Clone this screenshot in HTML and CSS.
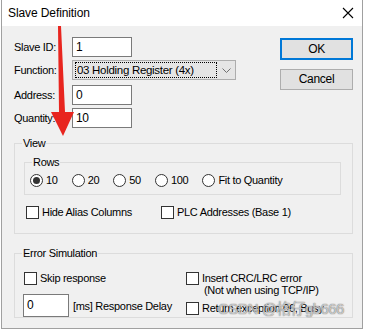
FILE: index.html
```html
<!DOCTYPE html>
<html lang="en">
<head>
    <meta charset="UTF-8">
    <title>Slave Definition</title>
    <link rel="stylesheet" href="styles.css">
</head>
<body>
    <div class="window">
        <div class="titlebar">
            <span class="title">Slave Definition</span>
            <svg class="close" width="12" height="12" viewBox="0 0 12 12">
                <path d="M1 1 L11 11 M11 1 L1 11" stroke="#000" stroke-width="1.1" fill="none"/>
            </svg>
        </div>

        <div class="dialog">
            <div class="top">
                <div class="fields">
                    <div class="row"><span class="label">Slave ID:</span><div class="edit">1</div></div>
                    <div class="row row-combo">
                        <span class="label">Function:</span>
                        <div class="combo">
                            <span class="combo-text">03 Holding Register (4x)</span>
                            <svg class="chevron" width="9" height="5" viewBox="0 0 9 5">
                                <path d="M0.5 0.5 L4.5 4.5 L8.5 0.5" stroke="#707070" fill="none"/>
                            </svg>
                        </div>
                    </div>
                    <div class="row row-address"><span class="label">Address:</span><div class="edit">0</div></div>
                    <div class="row"><span class="label">Quantity:</span><div class="edit">10</div></div>
                </div>
                <div class="buttons">
                    <div class="btn btn-default">OK</div>
                    <div class="btn btn-cancel">Cancel</div>
                </div>
            </div>

            <fieldset class="group group-view">
                <legend>View</legend>
                <fieldset class="group group-rows">
                    <legend>Rows</legend>
                    <div class="radios">
                        <span class="option"><span class="radio checked"></span>10</span>
                        <span class="option"><span class="radio"></span>20</span>
                        <span class="option"><span class="radio"></span>50</span>
                        <span class="option"><span class="radio"></span>100</span>
                        <span class="option"><span class="radio"></span>Fit to Quantity</span>
                    </div>
                </fieldset>
                <div class="view-checks">
                    <span class="option"><span class="check"></span>Hide Alias Columns</span>
                    <span class="option"><span class="check"></span>PLC Addresses (Base 1)</span>
                </div>
            </fieldset>

            <fieldset class="group group-error">
                <legend>Error Simulation</legend>
                <div class="error-grid">
                    <div class="error-left">
                        <span class="option"><span class="check"></span>Skip response</span>
                        <div class="delay-row">
                            <div class="edit edit-delay">0</div>
                            <span>[ms] Response Delay</span>
                        </div>
                    </div>
                    <div class="error-right">
                        <div class="option option-multi">
                            <span class="check"></span>
                            <div class="lines">
                                <div>Insert CRC/LRC error</div>
                                <div class="indent">(Not when using TCP/IP)</div>
                            </div>
                        </div>
                        <span class="option option-busy"><span class="check"></span>Return exception 06, Busy</span>
                    </div>
                </div>
            </fieldset>
        </div>
    </div>

    <svg class="arrow" width="366" height="335" viewBox="0 0 366 335">
        <polygon points="58,26 61,26 65,112 74,112 63,136 51,112 59,112" fill="#e8251f"/>
    </svg>
    <div class="watermark">CSDN @格仔gb666</div>
</body>
</html>
```

FILE: styles.css
```css
body {
    margin: 0;
    background: #fff;
    font-family: 'Liberation Sans', Arial, 'Noto Sans CJK SC', sans-serif;
    font-size: 11px;
    color: #000;
    position: relative;
    width: 366px;
    height: 335px;
    overflow: hidden;
}
.window {
    margin-left: 1px;
    width: 362px;
    box-sizing: border-box;
    border: 1px solid #a0a0a0;
    border-top: none;
}
.titlebar {
    height: 26px;
    background: #fff;
    display: flex;
    align-items: center;
    justify-content: space-between;
    padding: 0 8px 0 6px;
}
.title {
    font-size: 12px;
    letter-spacing: -0.1px;
}
.close {
    display: block;
}
.dialog {
    background: #f0f0f0;
    padding: 0 9px 10px 12px;
    letter-spacing: -0.3px;
}
.top {
    display: flex;
    justify-content: space-between;
    align-items: flex-start;
}
.fields {
    padding-top: 11px;
}
.row {
    display: flex;
    align-items: center;
    height: 20px;
    margin-bottom: 3px;
}
.row-combo {
    margin-bottom: 5px;
}
.row:last-child {
    margin-bottom: 0;
}
.label {
    width: 58px;
    flex: none;
}
.edit {
    box-sizing: border-box;
    width: 60px;
    height: 20px;
    background: #fff;
    border: 1px solid #7a7a7a;
    padding-left: 3px;
    line-height: 18px;
    font-size: 12px;
}
.combo {
    box-sizing: border-box;
    width: 164px;
    height: 20px;
    background: #e5e5e5;
    border: 1px solid #adadad;
    display: flex;
    align-items: center;
    padding-left: 2px;
}
.combo-text {
    width: 142px;
    height: 16px;
    box-sizing: border-box;
    border: 1px dotted #000;
    line-height: 14px;
    padding-left: 1px;
    font-size: 11.5px;
}
.chevron {
    margin-left: 5px;
}
.buttons {
    margin-top: 12px;
    display: flex;
    flex-direction: column;
    gap: 9px;
}
.btn {
    box-sizing: border-box;
    width: 73px;
    height: 21px;
    background: #e1e1e1;
    border: 1px solid #adadad;
    text-align: center;
    line-height: 19px;
    font-size: 12px;
}
.btn-default {
    height: 22px;
    border: 2px solid #0078d7;
    line-height: 18px;
}
.group {
    margin: 0;
    border: 1px solid #dcdcdc;
    min-width: 0;
}
.group legend {
    line-height: 14px;
    padding: 0 1px;
}
.group-view {
    margin-top: 8px;
    padding: 5px 11px 13px 9px;
}
.group-view > legend,
.group-error > legend {
    margin-left: -2px;
}
.group-rows {
    padding: 3px 5px 6px 5px;
}
.group-rows > legend {
    margin-left: 2px;
}
.radios {
    display: flex;
    gap: 14px;
    height: 16px;
    align-items: center;
}
.option {
    display: flex;
    align-items: center;
    gap: 3px;
    height: 16px;
}
.radio {
    box-sizing: border-box;
    width: 13px;
    height: 13px;
    border: 1px solid #333;
    border-radius: 50%;
    background: #fff;
    display: flex;
    align-items: center;
    justify-content: center;
}
.radio.checked::after {
    content: "";
    width: 7px;
    height: 7px;
    border-radius: 50%;
    background: #333;
}
.check {
    box-sizing: border-box;
    width: 13px;
    height: 13px;
    border: 1px solid #333;
    background: #fff;
    flex: none;
}
.view-checks {
    margin-top: 9px;
    padding-left: 2px;
    display: grid;
    grid-template-columns: 135px 1fr;
}
.group-error {
    margin-top: 12px;
    padding: 10px 9px 0 9px;
}
.error-grid {
    display: grid;
    grid-template-columns: 162px 1fr;
}
.delay-row {
    margin-top: 8px;
    display: flex;
    align-items: center;
    gap: 4px;
}
.edit-delay {
    width: 46px;
    height: 23px;
    margin-left: -1px;
    line-height: 21px;
}
.option-multi {
    height: auto;
    align-items: flex-start;
    margin-top: 2px;
}
.lines {
    line-height: 12px;
}
.indent {
    padding-left: 2px;
}
.option-busy {
    margin-top: 4px;
}
.arrow {
    position: absolute;
    left: 0;
    top: 0;
    pointer-events: none;
}
.watermark {
    position: absolute;
    left: 218px;
    top: 297px;
    font-size: 15px;
    letter-spacing: -0.6px;
    color: rgba(255, 255, 255, 0.6);
    text-shadow: 0 0 1px rgba(90, 90, 90, 0.7), 0 0 1px rgba(90, 90, 90, 0.7);
    white-space: nowrap;
    pointer-events: none;
}
```
